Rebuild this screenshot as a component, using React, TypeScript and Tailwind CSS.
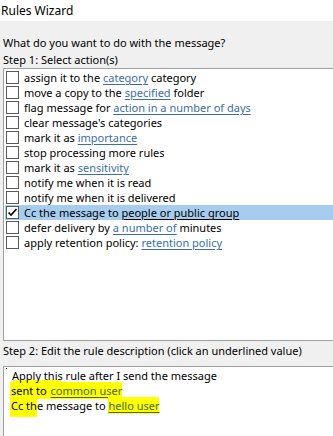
import React from "react"

type Part = { text: string; link?: boolean }

const actions: { parts: Part[]; checked?: boolean }[] = [
  { parts: [{ text: "assign it to the " }, { text: "category", link: true }, { text: " category" }] },
  { parts: [{ text: "move a copy to the " }, { text: "specified", link: true }, { text: " folder" }] },
  { parts: [{ text: "flag message for " }, { text: "action in a number of days", link: true }] },
  { parts: [{ text: "clear message's categories" }] },
  { parts: [{ text: "mark it as " }, { text: "importance", link: true }] },
  { parts: [{ text: "stop processing more rules" }] },
  { parts: [{ text: "mark it as " }, { text: "sensitivity", link: true }] },
  { parts: [{ text: "notify me when it is read" }] },
  { parts: [{ text: "notify me when it is delivered" }] },
  { parts: [{ text: "Cc the message to " }, { text: "people or public group", link: true }], checked: true },
  { parts: [{ text: "defer delivery by " }, { text: "a number of", link: true }, { text: " minutes" }] },
  { parts: [{ text: "apply retention policy: " }, { text: "retention policy", link: true }] },
]

function CheckBox({ checked }: { checked?: boolean }) {
  return (
    <div className="w-[13px] h-[13px] border border-[#5a5a5a] bg-white flex items-center justify-center shrink-0">
      {checked && (
        <svg width="11" height="11" viewBox="0 0 11 11">
          <path d="M1.5 5.5 L4 8 L9.5 2" fill="none" stroke="#000" strokeWidth="1.6" />
        </svg>
      )}
    </div>
  )
}

export default function App() {
  return (
    <div
      className="w-[333px] h-[436px] bg-[#f0f0f0] overflow-hidden text-[11px] text-black"
      style={{ fontFamily: '"Noto Sans", "Segoe UI", sans-serif' }}
    >
      <div className="h-[21px] bg-white flex items-center pl-[1px] text-[12px] leading-none">Rules Wizard</div>

      <div className="mt-[14px] pl-[3px] h-[16px] leading-[16px]">What do you want to do with the message?</div>
      <div className="mt-[1px] pl-[3px] h-[16px] leading-[16px]">Step 1: Select action(s)</div>

      {/* actions list */}
      <div className="ml-[3px] h-[273px] bg-white border-l border-t border-b border-[#a0a0a0] pt-[1px] pl-[1px]">
        {actions.map((a, i) => (
          <div
            key={i}
            className={`h-[15px] flex items-center gap-[5px] pl-[1px] whitespace-nowrap ${a.checked ? "bg-[#a6cdf0]" : ""}`}
          >
            <CheckBox checked={a.checked} />
            <span className="leading-[15px]">
              {a.parts.map((p, j) =>
                p.link ? (
                  <span
                    key={j}
                    className={`underline underline-offset-2 ${a.checked ? "text-black" : "text-[#3a6ea8]"}`}
                  >
                    {p.text}
                  </span>
                ) : (
                  <span key={j}>{p.text}</span>
                )
              )}
            </span>
          </div>
        ))}
      </div>

      <div className="mt-[2px] pl-[3px] h-[16px] leading-[16px] whitespace-nowrap">
        Step 2: Edit the rule description (click an underlined value)
      </div>

      {/* description box */}
      <div className="relative mt-[7px] ml-[3px] h-[80px] bg-white border-l border-t border-[#a0a0a0] pl-[6px] pt-[1px] leading-[15px]">
        <div className="absolute left-[2px] top-[1px] w-[1px] h-[1px] bg-black" />
        <div className="relative h-[15px] pl-[2px]">
          <div className="absolute left-[3px] top-[12px] w-[48px] h-[3px] bg-[#ffff00]" />
          <span className="relative">Apply this rule after I send the message</span>
        </div>
        <div className="h-[15px]">
          <span className="bg-[#ffff00] pl-[1px] pr-[1px] py-[1px]">sent to </span>
          <span className="bg-[#ffff00] py-[1px] underline underline-offset-2 text-[#45681d]">common user</span>
        </div>
        <div className="h-[15px]">
          <span className="bg-[#ffff00] pl-[1px] pt-[1px] pb-[4px]">Cc th</span>
          <span>e message to </span>
          <span className="bg-[#ffff00] py-[1px] underline underline-offset-2 text-[#45681d]">hello user</span>
        </div>
      </div>
    </div>
  )
}
